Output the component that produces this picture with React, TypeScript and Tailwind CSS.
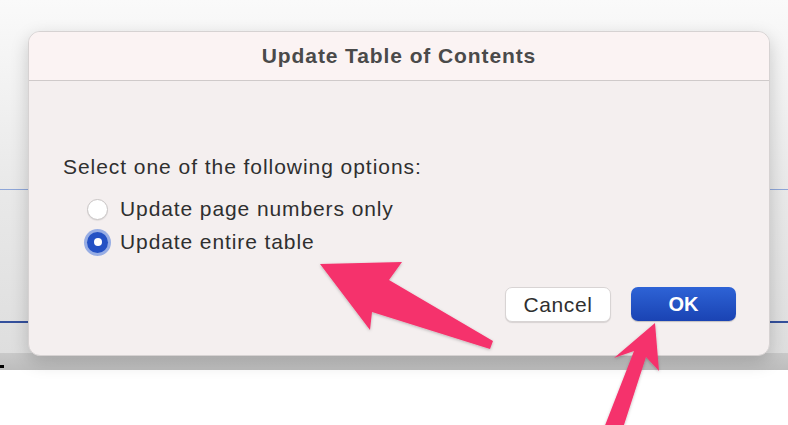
export default function App() {
  return (
    <div
      className="relative w-[788px] h-[425px] overflow-hidden bg-white"
      style={{ fontFamily: '"Liberation Sans", Arial, sans-serif' }}
    >
      {/* backdrop: the document behind the sheet */}
      <div className="relative h-[370px] bg-gradient-to-b from-[#fafafa] via-[#e9e9e9] to-[#dddddd]">
        <div className="absolute left-0 right-0 top-[189px] h-px bg-[#8ea6d8]" />
        <div className="absolute left-0 right-0 top-[321px] h-[2px] bg-[#34509c]" />
        <div className="absolute left-0 right-0 bottom-0 h-[17px] bg-gradient-to-b from-[#c9c9c9] to-[#bdbdbd]" />
        <div className="absolute left-0 top-[365px] w-[4px] h-[3px] bg-black" />

        <div className="relative ml-[28px] pt-[31px]">
          <div className="w-[742px] h-[325px] rounded-[12px] overflow-hidden border border-[#d6d2d2] bg-[#f4efef] shadow-[0_6px_18px_rgba(0,0,0,0.18)] flex flex-col">
            <div className="h-[49px] shrink-0 bg-[#fbf3f3] border-b border-[#cfcaca] flex items-center justify-center">
              <span className="text-[21px] font-bold text-[#4a4a4a] tracking-[0.9px]">
                Update Table of Contents
              </span>
            </div>
            <div className="flex-1 flex flex-col pl-[34px] pr-[33px]">
              <div className="mt-[74px] text-[21px] leading-[24px] text-[#2f2f2f] tracking-[0.95px]">
                Select one of the following options:
              </div>
              <div className="mt-[18px] ml-[24px] flex flex-col gap-[9px]">
                <label className="flex items-center gap-[12px] h-[24px]">
                  <span className="w-[21px] h-[21px] rounded-full bg-white border border-[#c9c5c5] shadow-[0_1px_1px_rgba(0,0,0,0.08)]" />
                  <span className="text-[21px] leading-[24px] text-[#2f2f2f] tracking-[0.9px]">
                    Update page numbers only
                  </span>
                </label>
                <label className="flex items-center gap-[12px] h-[24px]">
                  <span className="w-[21px] h-[21px] rounded-full bg-[#2451c4] ring-[3px] ring-[#6f92df]/70 flex items-center justify-center">
                    <span className="w-[8px] h-[8px] rounded-full bg-white" />
                  </span>
                  <span className="text-[21px] leading-[24px] text-[#2f2f2f] tracking-[0.9px]">
                    Update entire table
                  </span>
                </label>
              </div>
              <div className="mt-[33px] flex justify-end gap-[20px]">
                <button className="w-[106px] h-[35px] rounded-[7px] bg-white border border-[#d8d4d4] shadow-[0_1px_1px_rgba(0,0,0,0.12)] text-[21px] tracking-[0.6px] text-[#2f2f2f]">
                  Cancel
                </button>
                <button className="w-[105px] h-[34px] rounded-[7px] bg-gradient-to-b from-[#2e63d6] to-[#1a43b3] shadow-[0_1px_1px_rgba(0,0,0,0.2)] text-[20px] font-semibold text-white">
                  OK
                </button>
              </div>
            </div>
          </div>
        </div>
      </div>

      {/* annotation arrows */}
      <svg className="absolute inset-0 pointer-events-none" width="788" height="425" viewBox="0 0 788 425">
        <defs>
          <filter id="sh" x="-20%" y="-20%" width="140%" height="140%">
            <feDropShadow dx="0" dy="1" stdDeviation="1.5" floodColor="#000" floodOpacity="0.25" />
          </filter>
        </defs>
        <polygon
          points="320,264 402,262 389,280 493,341 490,349 372,312 370,330"
          fill="#f5336c"
          filter="url(#sh)"
        />
        <polygon
          points="655,323 659,371 646,357 623,428 604,428 634,351 614,358"
          fill="#f5336c"
          filter="url(#sh)"
        />
      </svg>
    </div>
  );
}
